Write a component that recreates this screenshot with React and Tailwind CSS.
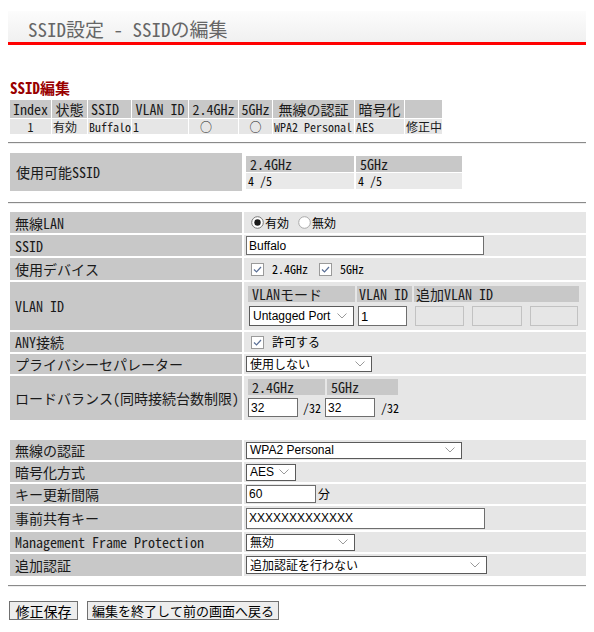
import React from "react";

const MONO = "font-['Noto_Sans_Mono_CJK_JP','Noto_Sans_CJK_JP',monospace]";
const SANS = "font-['Liberation_Sans','Noto_Sans_CJK_JP',sans-serif]";

function Chevron() {
  return (
    <svg width="10" height="6" viewBox="0 0 10 6" className="shrink-0">
      <polyline points="0.5,0.5 5,5 9.5,0.5" fill="none" stroke="#9a9a9a" strokeWidth="1" />
    </svg>
  );
}

function Select({ cls, text, font = SANS }) {
  return (
    <div className={`flex items-center justify-between overflow-hidden border border-[#5a5a5a] bg-white pl-[3px] pr-[6px] text-[12px] leading-none text-black ${font} ${cls}`}>
      <span className="whitespace-nowrap">{text}</span>
      <Chevron />
    </div>
  );
}

function Input({ cls, text = "", disabled = false }) {
  return (
    <div
      className={`flex items-center overflow-hidden pl-[2px] text-[12px] leading-none ${SANS} ${
        disabled ? "border border-[#c2c2c2] bg-[#e6e6e6]" : "border border-[#6e6e6e] bg-white text-black"
      } ${cls}`}
    >
      <span className="whitespace-nowrap">{text}</span>
    </div>
  );
}

function Check() {
  return (
    <svg width="13" height="13" viewBox="0 0 13 13" className="shrink-0">
      <rect x="0.5" y="0.5" width="12" height="12" fill="#fff" stroke="#9a9a9a" />
      <polyline points="3,6.5 5.5,9 10,4" fill="none" stroke="#5a6f96" strokeWidth="1.2" />
    </svg>
  );
}

function Radio({ on }) {
  return (
    <svg width="13" height="13" viewBox="0 0 13 13" className="shrink-0">
      <circle cx="6.5" cy="6.5" r="5.8" fill="#fff" stroke={on ? "#777" : "#aaa"} />
      {on && <circle cx="6.5" cy="6.5" r="3.2" fill="#1a1a1a" />}
    </svg>
  );
}

function Hr() {
  return <div className="h-[2px] border-t border-t-[#8a8a8a] border-b border-b-[#eeeeee]" />;
}

function Label({ h, children }) {
  return (
    <div className={`flex items-center bg-[#c8c8c8] pl-[5px] text-[14px] leading-none text-[#1a1a1a] ${h}`}>
      <span className="whitespace-nowrap">{children}</span>
    </div>
  );
}

function Value({ children, cls = "" }) {
  return <div className={`flex items-center bg-[#e6e6e6] pl-[2px] ${cls}`}>{children}</div>;
}

export default function App() {
  const th = "flex items-center justify-center overflow-hidden bg-[#c8c8c8] h-[18px] text-[14px] leading-[18px] whitespace-nowrap text-[#1a1a1a]";
  const td = "flex items-center overflow-hidden bg-[#e6e6e6] h-[15px] text-[12px] leading-[15px] whitespace-nowrap text-[#1a1a1a]";
  const sh = "flex h-[16px] items-center bg-[#c8c8c8] text-[14px] leading-[16px] whitespace-nowrap text-[#1a1a1a]";
  const sv = "flex h-[16px] items-center bg-[#e9e9e9] pl-[2px] text-[12px] leading-[16px]";
  return (
    <div className={`w-[594px] bg-white px-[8px] pt-[11px] pb-[9px] text-black ${MONO}`}>
      {/* Title */}
      <div className="flex h-[31px] items-center bg-gradient-to-b from-[#fcfcfc] to-[#f0f0f0] pl-[20px] pt-[3px]">
        <span className="text-[19px] leading-none text-[#666]">SSID設定 - SSIDの編集</span>
      </div>
      <div className="h-[3px] bg-[#ff0000]" />

      {/* Heading */}
      <div className="mt-[32px] ml-[2px] flex h-[20px] items-center text-[15px] font-bold leading-none text-[#990000]">
        SSID編集
      </div>

      {/* Summary table */}
      <div className="mt-[3px] ml-[2px] grid w-max grid-cols-[41px_35px_43px_56px_49px_33px_81px_49px_37px] gap-px">
        <div className={th}>Index</div>
        <div className={th}>状態</div>
        <div className={`${th} !justify-start pl-[3px]`}>SSID</div>
        <div className={th}>VLAN ID</div>
        <div className={th}>2.4GHz</div>
        <div className={th}>5GHz</div>
        <div className={th}>無線の認証</div>
        <div className={th}>暗号化</div>
        <div className={th}></div>

        <div className={`${td} justify-center`}>1</div>
        <div className={`${td} pl-px`}>有効</div>
        <div className={`${td} pl-px`}>Buffalo</div>
        <div className={`${td} pl-px`}>1</div>
        <div className={`${td} pl-[11px]`}>○</div>
        <div className={`${td} justify-center`}>○</div>
        <div className={`${td} pl-px`}>WPA2 Personal</div>
        <div className={`${td} pl-px`}>AES</div>
        <div className={`${td} pl-px`}>修正中</div>
      </div>

      <div className="mt-[8px]">
        <Hr />
      </div>

      {/* Available SSID */}
      <div className="mt-[9px] ml-[2px] grid grid-cols-[232px_344px] gap-x-[2px]">
        <div className="flex h-[38px] items-center bg-[#c8c8c8] pl-[6px] text-[14px] leading-none text-[#1a1a1a]">使用可能SSID</div>
        <div className="pl-[2px] pt-[3px]">
          <div className="grid w-max grid-cols-[108px_106px] gap-x-[2px] gap-y-px">
            <div className={`${sh} pl-[4px]`}>2.4GHz</div>
            <div className={`${sh} pl-[4px]`}>5GHz</div>
            <div className={sv}>4 /5</div>
            <div className={sv}>4 /5</div>
          </div>
        </div>
      </div>

      <div className="mt-[11px]">
        <Hr />
      </div>

      {/* Form table 1 */}
      <div className="mt-[8px] ml-[2px] grid grid-cols-[232px_342px] gap-x-[2px] gap-y-[2px]">
        <Label h="h-[21px]">無線LAN</Label>
        <Value cls="pl-[7px] text-[12px] leading-none">
          <Radio on />
          <span className="ml-[1px]">有効</span>
          <span className="ml-[9px]">
            <Radio />
          </span>
          <span className="ml-[1px]">無効</span>
        </Value>

        <Label h="h-[21px]">SSID</Label>
        <Value>
          <Input cls="h-[19px] w-[238px]" text="Buffalo" />
        </Value>

        <Label h="h-[22px]">使用デバイス</Label>
        <Value cls="pl-[7px] text-[12px] leading-none">
          <Check />
          <span className="ml-[8px]">2.4GHz</span>
          <span className="ml-[11px]">
            <Check />
          </span>
          <span className="ml-[8px]">5GHz</span>
        </Value>

        <Label h="h-[48px]">VLAN ID</Label>
        <div className="flex flex-col bg-[#e6e6e6] pl-[4px] pt-[4px]">
          <div className="grid w-max grid-cols-[107px_55px_165px] gap-x-[2px]">
            <div className={`${sh} pl-[4px]`}>VLANモード</div>
            <div className={`${sh} pl-[2px]`}>VLAN ID</div>
            <div className={`${sh} pl-[2px]`}>追加VLAN ID</div>
          </div>
          <div className="mt-[4px] flex items-center">
            <Select cls="ml-[1px] h-[20px] w-[105px] pr-[5px]" text="Untagged Port" />
            <Input cls="ml-[4px] h-[20px] w-[49px] !text-[13px]" text="1" />
            <Input cls="ml-[8px] h-[20px] w-[49px]" disabled />
            <Input cls="ml-[8px] h-[20px] w-[50px]" disabled />
            <Input cls="ml-[8px] h-[20px] w-[48px]" disabled />
          </div>
        </div>

        <Label h="h-[20px]">ANY接続</Label>
        <Value cls="pl-[7px] text-[12px] leading-none">
          <Check />
          <span className="ml-[8px]">許可する</span>
        </Value>

        <Label h="h-[20px]">プライバシーセパレーター</Label>
        <Value>
          <Select cls="h-[16px] w-[126px]" font={MONO} text="使用しない" />
        </Value>

        <Label h="h-[44px]">ロードバランス(同時接続台数制限)</Label>
        <div className="flex flex-col bg-[#e6e6e6] pl-[4px] pt-[3px]">
          <div className="grid w-max grid-cols-[77px_71px] gap-x-[2px]">
            <div className={`${sh} pl-[4px]`}>2.4GHz</div>
            <div className={`${sh} pl-[4px]`}>5GHz</div>
          </div>
          <div className="mt-[3px] flex items-center text-[12px] leading-none">
            <Input cls="h-[19px] w-[50px]" text="32" />
            <span className="ml-[5px] w-[22px]">/32</span>
            <Input cls="h-[19px] w-[50px]" text="32" />
            <span className="ml-[6px]">/32</span>
          </div>
        </div>
      </div>

      {/* Form table 2 */}
      <div className="mt-[20px] ml-[2px] grid grid-cols-[232px_342px] gap-x-[2px] gap-y-[2px]">
        <Label h="h-[20px]">無線の認証</Label>
        <Value>
          <Select cls="h-[17px] w-[216px]" text="WPA2 Personal" />
        </Value>

        <Label h="h-[20px]">暗号化方式</Label>
        <Value>
          <Select cls="h-[17px] w-[50px] pr-[4px]" text="AES" />
        </Value>

        <Label h="h-[20px]">キー更新間隔</Label>
        <Value cls="text-[12px] leading-none">
          <Input cls="h-[18px] w-[70px]" text="60" />
          <span className="ml-[2px]">分</span>
        </Value>

        <Label h="h-[24px]">事前共有キー</Label>
        <Value>
          <Input cls="h-[21px] w-[239px]" text="XXXXXXXXXXXXX" />
        </Value>

        <Label h="h-[20px]">Management Frame Protection</Label>
        <Value>
          <Select cls="h-[17px] w-[109px]" font={MONO} text="無効" />
        </Value>

        <Label h="h-[22px]">追加認証</Label>
        <Value>
          <Select cls="h-[18px] w-[241px]" font={MONO} text="追加認証を行わない" />
        </Value>
      </div>

      <div className="mt-[9px]">
        <Hr />
      </div>

      {/* Buttons */}
      <div className="mt-[14px] ml-[1px] flex items-center gap-[9px]">
        <button className="flex h-[19px] w-[69px] items-center justify-center border border-[#707070] bg-[#ededed] text-[14px] leading-none text-black">
          修正保存
        </button>
        <button className="flex h-[19px] w-[192px] items-center justify-center border border-[#707070] bg-[#ededed] text-[13px] leading-none text-black">
          編集を終了して前の画面へ戻る
        </button>
      </div>
    </div>
  );
}
